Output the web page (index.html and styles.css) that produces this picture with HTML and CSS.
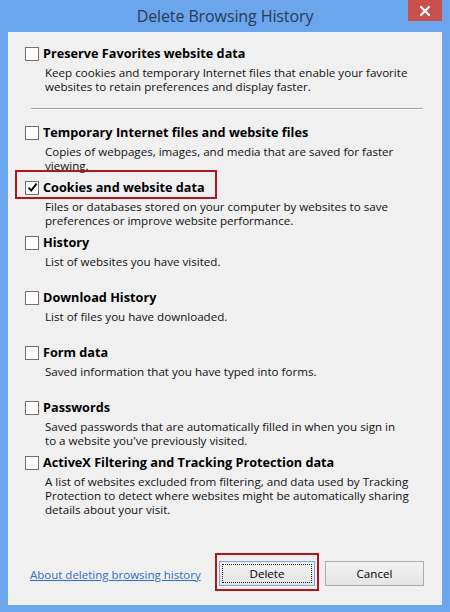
FILE: index.html
```html
<!DOCTYPE html>
<html lang="en">
<head>
<meta charset="utf-8">
<title>Delete Browsing History</title>
<link rel="stylesheet" href="styles.css">
</head>
<body>
<div class="window">
  <div class="titlebar">
    <span class="title">Delete Browsing History</span>
    <div class="close" aria-label="Close">
      <svg width="10" height="10" viewBox="0 0 10 10"><path d="M1 1 L9 9 M9 1 L1 9" stroke="#fff" stroke-width="2.2" stroke-linecap="square"/></svg>
    </div>
  </div>
  <div class="panel">
    <div class="items">
      <div class="item first">
        <div class="row"><span class="box"></span><span class="label">Preserve Favorites website data</span></div>
        <div class="desc">Keep cookies and temporary Internet files that enable your favorite<br>websites to retain preferences and display faster.</div>
      </div>
      <div class="sep"></div>
      <div class="item">
        <div class="row"><span class="box"></span><span class="label">Temporary Internet files and website files</span></div>
        <div class="desc">Copies of webpages, images, and media that are saved for faster<br>viewing.</div>
      </div>
      <div class="item">
        <div class="highlight highlight-row"></div>
        <div class="row"><span class="box checked"><svg width="11" height="11" viewBox="0 0 11 11"><path d="M1.5 5.5 L4.2 8.6 L9.6 1.6" fill="none" stroke="#000" stroke-width="1.9"/></svg></span><span class="label">Cookies and website data</span></div>
        <div class="desc">Files or databases stored on your computer by websites to save<br>preferences or improve website performance.</div>
      </div>
      <div class="item">
        <div class="row"><span class="box"></span><span class="label">History</span></div>
        <div class="desc">List of websites you have visited.</div>
      </div>
      <div class="item">
        <div class="row"><span class="box"></span><span class="label">Download History</span></div>
        <div class="desc">List of files you have downloaded.</div>
      </div>
      <div class="item">
        <div class="row"><span class="box"></span><span class="label">Form data</span></div>
        <div class="desc">Saved information that you have typed into forms.</div>
      </div>
      <div class="item">
        <div class="row"><span class="box"></span><span class="label">Passwords</span></div>
        <div class="desc">Saved passwords that are automatically filled in when you sign in<br>to a website you've previously visited.</div>
      </div>
      <div class="item">
        <div class="row"><span class="box"></span><span class="label">ActiveX Filtering and Tracking Protection data</span></div>
        <div class="desc">A list of websites excluded from filtering, and data used by Tracking<br>Protection to detect where websites might be automatically sharing<br>details about your visit.</div>
      </div>
    </div>
    <div class="footer">
      <a class="link" href="#">About deleting browsing history</a>
      <div class="buttons">
        <div class="btn-wrap">
          <div class="highlight highlight-btn"></div>
          <button class="btn btn-default"><span class="focus">Delete</span></button>
        </div>
        <button class="btn btn-cancel">Cancel</button>
      </div>
    </div>
  </div>
</div>
</body>
</html>
```
FILE: styles.css
```css
* { box-sizing: border-box; }
html, body { margin: 0; padding: 0; }
body {
  width: 450px;
  height: 612px;
  background: #6ba6ec;
  font-family: "Open Sans", "Noto Sans", "Liberation Sans", sans-serif;
  color: #000;
  overflow: hidden;
}
.window {
  width: 450px;
  height: 612px;
  display: flex;
  flex-direction: column;
}
.titlebar {
  position: relative;
  height: 32px;
  display: flex;
  align-items: center;
  justify-content: center;
}
.title {
  font-size: 16px;
  color: #263b58;
  margin-top: -1px;
  letter-spacing: -0.1px;
}
.close {
  position: absolute;
  top: 0;
  right: 8px;
  width: 34px;
  height: 21px;
  background: #c8504b;
  display: flex;
  align-items: center;
  justify-content: center;
}
.panel {
  margin: 0 8px 7px 8px;
  flex: 1;
  background: #f0f0f0;
  display: flex;
  flex-direction: column;
}
.items {
  padding: 14px 0 0 17px;
  display: flex;
  flex-direction: column;
}
.item {
  position: relative;
  height: 55px;
}
.sep {
  height: 1px;
  background: #a0a0a0;
  border-bottom: 1px solid #fff;
  box-sizing: content-box;
  width: 392px;
  margin: 7px 0 15px 6px;
}
.row {
  height: 15px;
  display: flex;
  align-items: center;
  gap: 4px;
}
.box {
  width: 14px;
  height: 14px;
  border: 1px solid #707070;
  background: #fff;
  display: flex;
  align-items: center;
  justify-content: center;
  flex: none;
}
.label {
  font-weight: 700;
  font-size: 12.7px;
  letter-spacing: 0;
  line-height: 15px;
}
.desc {
  margin: 5px 0 0 20px;
  font-size: 11.6px;
  line-height: 14px;
  letter-spacing: 0;
  color: #111;
  white-space: nowrap;
}
.highlight {
  position: absolute;
  border: 2px solid #b2161d;
  pointer-events: none;
}
.highlight-row {
  left: -10px;
  top: -10px;
  width: 202px;
  height: 29px;
}
.footer {
  margin-top: auto;
  display: flex;
  align-items: center;
  padding: 0 18px 19px 22px;
}
.link {
  font-size: 11.5px;
  color: #2f6cc7;
  text-decoration: underline;
  margin-top: 1px;
}
.buttons {
  margin-left: auto;
  display: flex;
  gap: 10px;
}
.btn-wrap {
  position: relative;
}
.highlight-btn {
  left: -4px;
  top: -8px;
  right: -4px;
  bottom: -5px;
}
.btn {
  height: 25px;
  font-family: inherit;
  font-size: 11.6px;
  color: #000;
  padding: 0;
  margin: 0;
  background: linear-gradient(#f3f3f3, #e4e4e4);
  border: 1px solid #acacac;
  display: flex;
  align-items: center;
  justify-content: center;
}
.btn-default {
  width: 96px;
  border-color: #76a9d8;
  padding: 2px;
}
.focus {
  flex: 1;
  align-self: stretch;
  display: flex;
  align-items: center;
  justify-content: center;
  border: 1px dotted #222;
}
.btn-cancel {
  width: 99px;
}
```
